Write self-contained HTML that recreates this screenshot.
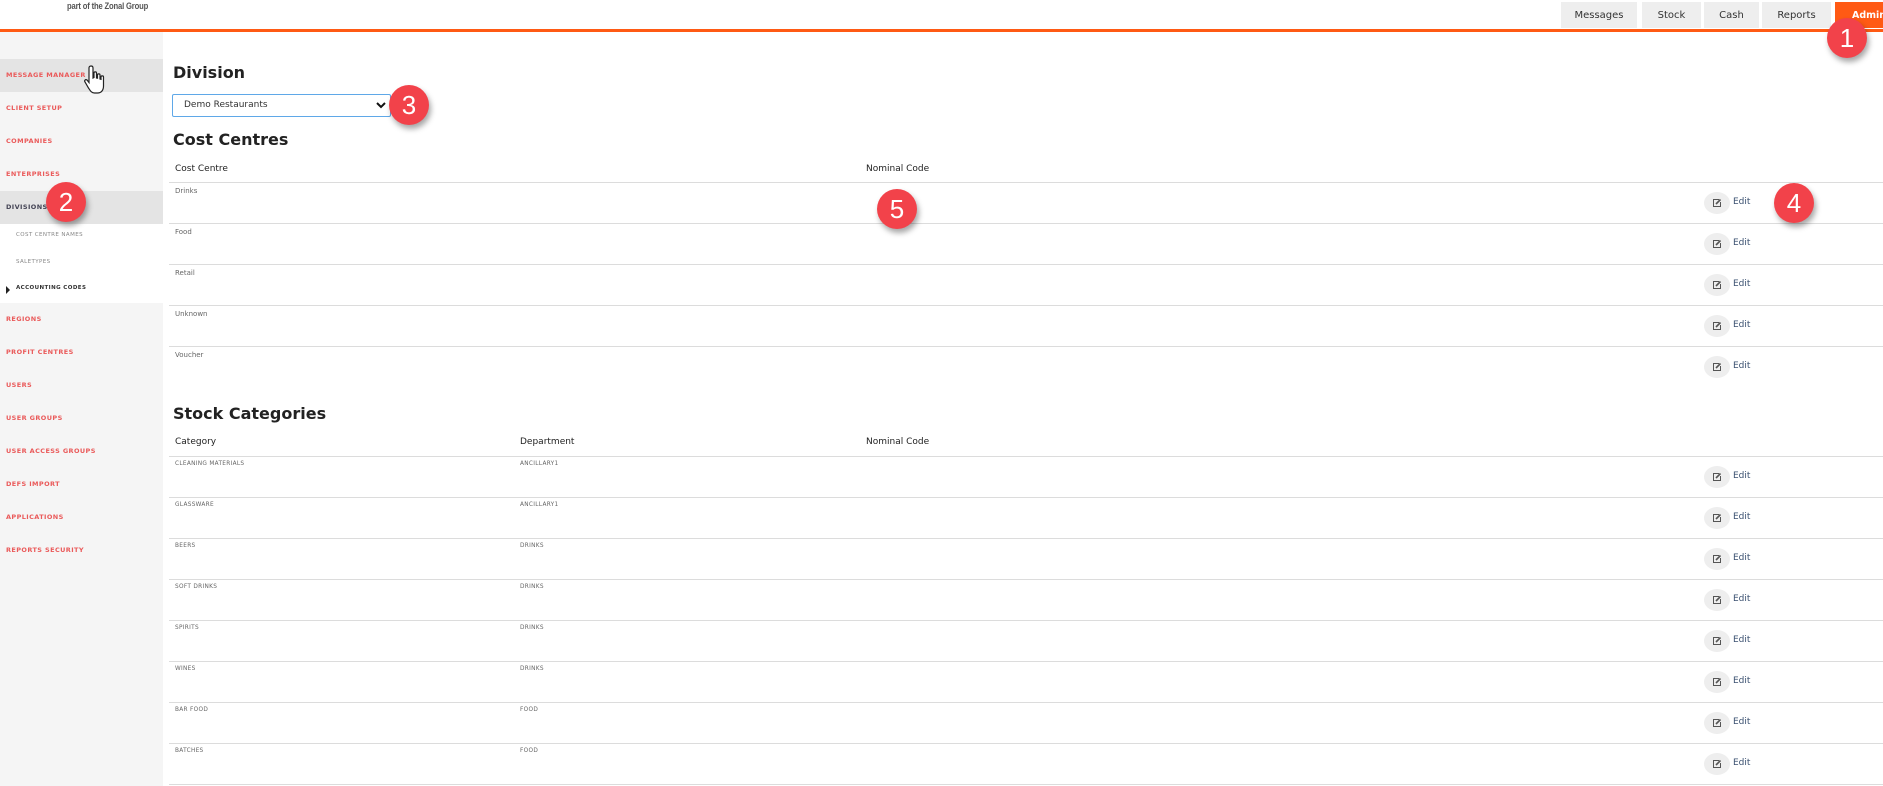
<!DOCTYPE html>
<html><head><meta charset="utf-8"><style>
*{margin:0;padding:0;box-sizing:border-box}
body{width:1883px;height:786px;overflow:hidden;background:#fff;font-family:"DejaVu Sans","Liberation Sans",sans-serif;position:relative}
.abs{position:absolute}
.logo{left:67px;top:1px;font:bold 9px "Liberation Sans",sans-serif;color:#555;letter-spacing:-0.2px;transform:scaleX(.85);transform-origin:left}
.bar{left:0;top:29px;width:1883px;height:3px;background:#ff5a14}
.tab{top:2px;height:26px;background:#eee;font-size:10px;color:#333;display:flex;align-items:center;justify-content:center}
.side{left:0;top:32px;width:163px;height:754px;background:#f5f5f5}
.it{left:0;width:163px;height:33px;padding-left:6px;display:flex;align-items:center;font-size:6.5px;font-weight:bold;color:#ea5a5a;letter-spacing:.4px}
.sub{left:16px;font-size:5.5px;color:#888;letter-spacing:.4px}
h2{position:absolute;font-weight:bold;font-size:16px;color:#222}
.th{position:absolute;font-size:9px;color:#222}
.line{position:absolute;left:169px;width:1714px;height:1px;background:#dcdcdc}
.td{position:absolute;font-size:7px;color:#666}
.td2{position:absolute;font-size:5.8px;color:#666;letter-spacing:.3px}
.ed{position:absolute;left:1704px;width:26px;height:22px;border-radius:50%;background:#eee}
.ed svg{position:absolute;left:8px;top:6px}
.et{position:absolute;left:1733px;font-size:9px;color:#3a5070}
.b{position:absolute;width:40px;height:40px;border-radius:50%;background:#f2424a;color:#fff;font:26px "Liberation Sans",sans-serif;display:flex;align-items:center;justify-content:center;box-shadow:2px 4px 6px rgba(0,0,0,.35)}
</style></head><body>
<div class="abs logo">part of the Zonal Group</div>
<div class="abs tab" style="left:1561px;width:76px">Messages</div>
<div class="abs tab" style="left:1642px;width:59px">Stock</div>
<div class="abs tab" style="left:1704px;width:55px">Cash</div>
<div class="abs tab" style="left:1762px;width:69px">Reports</div>
<div class="abs tab" style="left:1835px;width:48px;background:#ff5a14;color:#fff;font-weight:bold;justify-content:flex-start;padding-left:17px;font-size:9.5px">Admin</div>
<div class="abs bar"></div>
<div class="abs side"></div>
<div class="abs" style="left:0;top:59px;width:163px;height:33px;background:#e4e4e4"></div>
<div class="abs" style="left:0;top:191px;width:163px;height:33px;background:#e4e4e4"></div>
<div class="abs" style="left:0;top:224px;width:163px;height:79px;background:#fff"></div>
<div class="abs it" style="top:58px">MESSAGE MANAGER</div>
<div class="abs it" style="top:91px">CLIENT SETUP</div>
<div class="abs it" style="top:124px">COMPANIES</div>
<div class="abs it" style="top:157px">ENTERPRISES</div>
<div class="abs it" style="top:190px;color:#445">DIVISIONS</div>
<div class="abs sub" style="top:232px">COST CENTRE NAMES</div>
<div class="abs sub" style="top:259px">SALETYPES</div>
<div class="abs sub" style="top:285px;color:#333;font-weight:bold">ACCOUNTING CODES</div>
<div class="abs" style="left:6px;top:286px;width:0;height:0;border-left:4px solid #222;border-top:4px solid transparent;border-bottom:4px solid transparent"></div>
<div class="abs it" style="top:302px">REGIONS</div>
<div class="abs it" style="top:335px">PROFIT CENTRES</div>
<div class="abs it" style="top:368px">USERS</div>
<div class="abs it" style="top:401px">USER GROUPS</div>
<div class="abs it" style="top:434px">USER ACCESS GROUPS</div>
<div class="abs it" style="top:467px">DEFS IMPORT</div>
<div class="abs it" style="top:500px">APPLICATIONS</div>
<div class="abs it" style="top:533px">REPORTS SECURITY</div>
<svg class="abs" style="left:82px;top:64px" width="28" height="34" viewBox="0 0 28 34"><path d="M9 2c1.5 0 2 1 2 2v10l1-.5V9c0-1.5 2.5-1.5 2.5 0v5l1 .2V11c0-1.5 2.5-1.5 2.5 0v4l1 .3V13c0-1.5 2.5-1.5 2.5 0v9c0 4-2 7-6 7h-3c-3 0-4-2-6-5L3 18c-1-1.5.5-3 2-2l2 2.5V4c0-1 .5-2 2-2z" fill="#fff" stroke="#222" stroke-width="1.2"/></svg>
<h2 style="left:173px;top:63px">Division</h2>
<div class="abs" style="left:172px;top:94px;width:219px;height:23px;border:1px solid #5fa8e8;border-radius:2px;font-size:9px;color:#333;padding:5px 11px">Demo Restaurants</div>
<svg class="abs" style="left:376px;top:101px" width="10" height="8" viewBox="0 0 10 8"><path d="M1 2l4 4 4-4" fill="none" stroke="#111" stroke-width="2"/></svg>
<h2 style="left:173px;top:130px">Cost Centres</h2>
<div class="th" style="left:175px;top:164px">Cost Centre</div>
<div class="th" style="left:866px;top:164px">Nominal Code</div>
<div class="line" style="top:182px"></div><div class="line" style="top:223px"></div><div class="line" style="top:264px"></div><div class="line" style="top:305px"></div><div class="line" style="top:346px"></div>
<div class="td" style="left:175px;top:187px">Drinks</div>
<div class="td" style="left:175px;top:228px">Food</div>
<div class="td" style="left:175px;top:269px">Retail</div>
<div class="td" style="left:175px;top:310px">Unknown</div>
<div class="td" style="left:175px;top:351px">Voucher</div>
<h2 style="left:173px;top:404px">Stock Categories</h2>
<div class="th" style="left:175px;top:437px">Category</div>
<div class="th" style="left:520px;top:437px">Department</div>
<div class="th" style="left:866px;top:437px">Nominal Code</div>
<div class="line" style="top:456px"></div><div class="line" style="top:497px"></div><div class="line" style="top:538px"></div><div class="line" style="top:579px"></div><div class="line" style="top:620px"></div><div class="line" style="top:661px"></div><div class="line" style="top:702px"></div><div class="line" style="top:743px"></div><div class="line" style="top:784px"></div>
<div class="td2" style="left:175px;top:461px">CLEANING MATERIALS</div><div class="td2" style="left:520px;top:461px">ANCILLARY1</div>
<div class="td2" style="left:175px;top:502px">GLASSWARE</div><div class="td2" style="left:520px;top:502px">ANCILLARY1</div>
<div class="td2" style="left:175px;top:543px">BEERS</div><div class="td2" style="left:520px;top:543px">DRINKS</div>
<div class="td2" style="left:175px;top:584px">SOFT DRINKS</div><div class="td2" style="left:520px;top:584px">DRINKS</div>
<div class="td2" style="left:175px;top:625px">SPIRITS</div><div class="td2" style="left:520px;top:625px">DRINKS</div>
<div class="td2" style="left:175px;top:666px">WINES</div><div class="td2" style="left:520px;top:666px">DRINKS</div>
<div class="td2" style="left:175px;top:707px">BAR FOOD</div><div class="td2" style="left:520px;top:707px">FOOD</div>
<div class="td2" style="left:175px;top:748px">BATCHES</div><div class="td2" style="left:520px;top:748px">FOOD</div>
<div id="eds"></div>
<script>
var ys=[192,233,274,315,356,466,507,548,589,630,671,712,753],h='';
ys.forEach(function(y){h+='<div class="ed" style="top:'+y+'px"><svg width="10" height="10" viewBox="0 0 10 10"><path d="M7 1.5H1.5v7h7V4" fill="none" stroke="#555" stroke-width="1"/><path d="M4 6l4.5-4.5" stroke="#555" stroke-width="1.6"/></svg></div><div class="et" style="top:'+(y+5)+'px">Edit</div>';});
document.getElementById('eds').innerHTML=h;
</script>
<div class="b" style="left:1827px;top:18px">1</div>
<div class="b" style="left:46px;top:182px">2</div>
<div class="b" style="left:389px;top:85px">3</div>
<div class="b" style="left:1774px;top:183px">4</div>
<div class="b" style="left:877px;top:189px">5</div>
</body></html>
